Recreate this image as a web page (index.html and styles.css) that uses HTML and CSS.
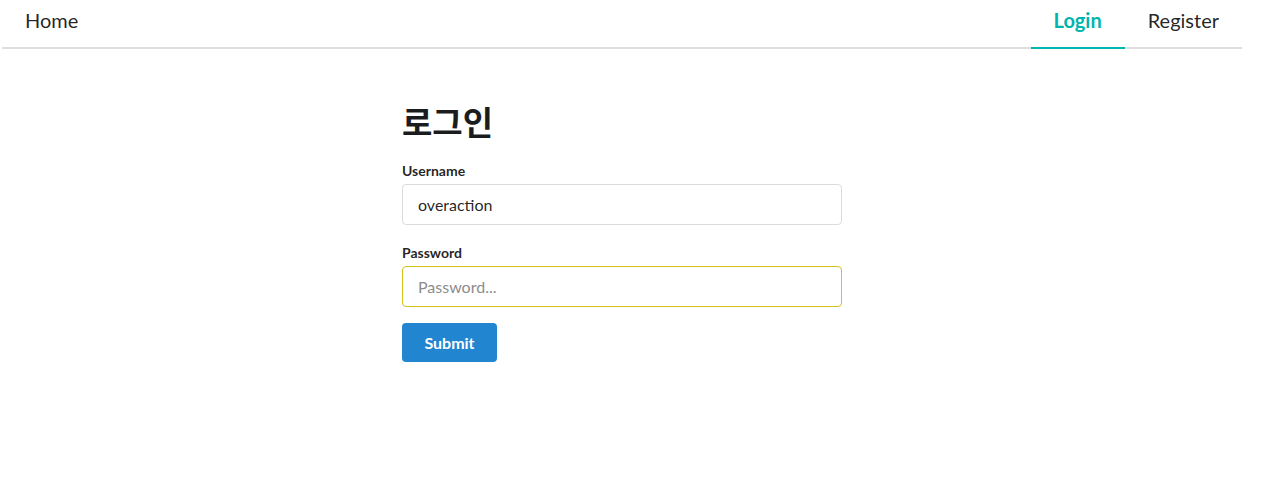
FILE: index.html
```html
<!DOCTYPE html>
<html lang="ko">
<head>
<meta charset="utf-8">
<title>로그인</title>
<link rel="stylesheet" href="styles.css">
</head>
<body>
<div class="page">
  <nav class="menu">
    <a class="item" href="#">Home</a>
    <div class="right">
      <a class="item active" href="#">Login</a>
      <a class="item" href="#">Register</a>
    </div>
  </nav>
  <main class="content">
    <form class="form">
      <h2 class="title">로그인</h2>
      <div class="field">
        <label class="label">Username</label>
        <input class="input" type="text" value="overaction">
      </div>
      <div class="field last">
        <label class="label">Password</label>
        <input class="input focus" type="password" placeholder="Password...">
      </div>
      <button class="button" type="button">Submit</button>
    </form>
  </main>
</div>
</body>
</html>
```
FILE: styles.css
```css
html, body {
  margin: 0;
  padding: 0;
  background: #fff;
}
body {
  font-family: Lato, "Noto Sans CJK KR", sans-serif;
  color: rgba(0,0,0,0.87);
}
.page {
  margin: 0 30px 0 2px;
}
.menu {
  display: flex;
  justify-content: space-between;
  border-bottom: 2px solid #dedede;
  height: 47px;
}
.right {
  display: flex;
}
.item {
  display: flex;
  align-items: center;
  padding: 0 23px 7px;
  font-size: 20px;
  color: rgba(0,0,0,0.87);
  text-decoration: none;
  border-bottom: 2px solid transparent;
  margin-bottom: -2px;
  box-sizing: border-box;
  height: 49px;
}
.item.active {
  color: #00b5ad;
  font-weight: 700;
  border-bottom-color: #00b5ad;
}
.content {
  display: flex;
  justify-content: center;
  padding-top: 52px;
}
.form {
  width: 440px;
  display: flex;
  flex-direction: column;
}
.title {
  font-family: "Noto Sans CJK KR", Lato, sans-serif;
  font-size: 33px;
  font-weight: 700;
  color: #1b1c1d;
  margin: 0 0 21px;
  line-height: 40px;
}
.field {
  display: flex;
  flex-direction: column;
  margin-bottom: 19px;
}
.field.last {
  margin-bottom: 16px;
}
.label {
  font-size: 14px;
  font-weight: 700;
  line-height: 17px;
  margin-bottom: 5px;
  color: rgba(0,0,0,0.87);
}
.input {
  font-family: Lato, sans-serif;
  font-size: 16px;
  height: 41px;
  box-sizing: border-box;
  padding: 0 15px;
  border: 1px solid #dcdcdc;
  border-radius: 4px;
  color: rgba(0,0,0,0.87);
  outline: none;
}
.input::placeholder {
  color: #8c8c8c;
}
.input.focus {
  border-color: #d6c21a;
}
.button {
  align-self: flex-start;
  width: 95px;
  height: 39px;
  border: none;
  border-radius: 4px;
  background: #2185d0;
  color: #fff;
  font-family: Lato, sans-serif;
  font-size: 16px;
  font-weight: 700;
  cursor: pointer;
}
```
